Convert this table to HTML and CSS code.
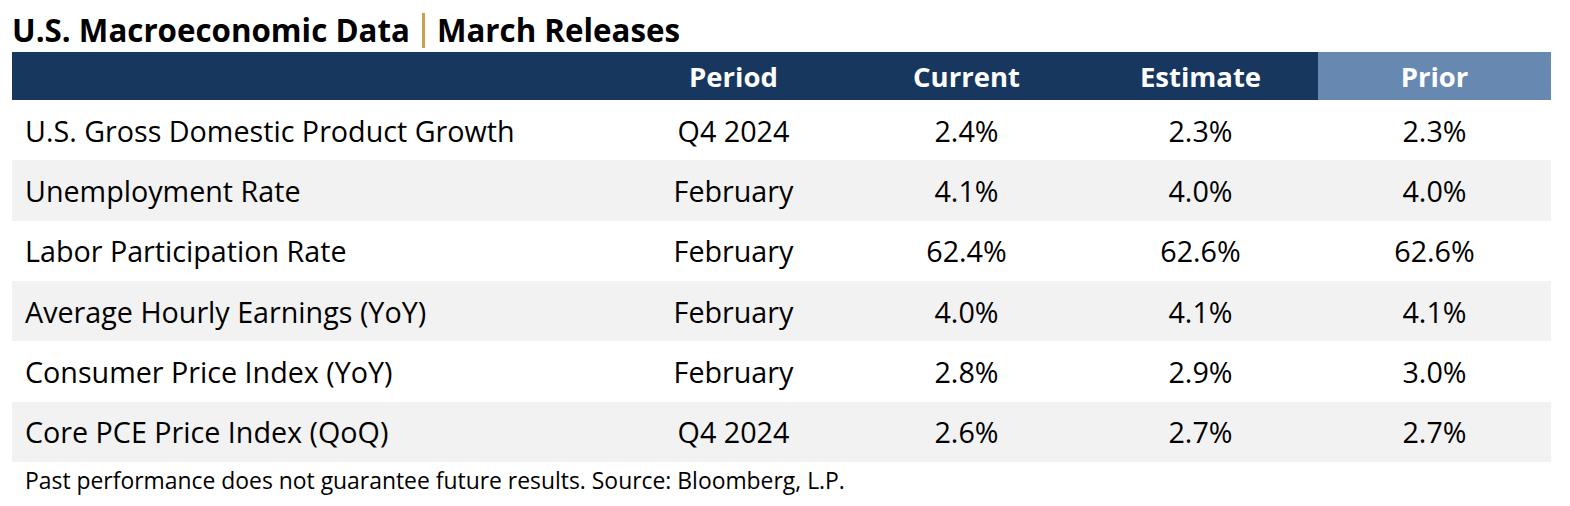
FILE: index.html
```html
<!DOCTYPE html>
<html>
<head>
<meta charset="utf-8">
<link rel="stylesheet" href="styles.css">
</head>
<body>
<div class="page">
  <h1 class="title">U.S. Macroeconomic Data<span class="bar"></span>March Releases</h1>
  <div class="table">
    <div class="row head">
      <div class="cell label"></div>
      <div class="cell">Period</div>
      <div class="cell">Current</div>
      <div class="cell">Estimate</div>
      <div class="cell prior">Prior</div>
    </div>
    <div class="row">
      <div class="cell label">U.S. Gross Domestic Product Growth</div>
      <div class="cell">Q4 2024</div>
      <div class="cell">2.4%</div>
      <div class="cell">2.3%</div>
      <div class="cell">2.3%</div>
    </div>
    <div class="row alt">
      <div class="cell label">Unemployment Rate</div>
      <div class="cell">February</div>
      <div class="cell">4.1%</div>
      <div class="cell">4.0%</div>
      <div class="cell">4.0%</div>
    </div>
    <div class="row">
      <div class="cell label">Labor Participation Rate</div>
      <div class="cell">February</div>
      <div class="cell">62.4%</div>
      <div class="cell">62.6%</div>
      <div class="cell">62.6%</div>
    </div>
    <div class="row alt">
      <div class="cell label">Average Hourly Earnings (YoY)</div>
      <div class="cell">February</div>
      <div class="cell">4.0%</div>
      <div class="cell">4.1%</div>
      <div class="cell">4.1%</div>
    </div>
    <div class="row">
      <div class="cell label">Consumer Price Index (YoY)</div>
      <div class="cell">February</div>
      <div class="cell">2.8%</div>
      <div class="cell">2.9%</div>
      <div class="cell">3.0%</div>
    </div>
    <div class="row alt">
      <div class="cell label">Core PCE Price Index (QoQ)</div>
      <div class="cell">Q4 2024</div>
      <div class="cell">2.6%</div>
      <div class="cell">2.7%</div>
      <div class="cell">2.7%</div>
    </div>
  </div>
  <p class="note">Past performance does not guarantee future results. Source: Bloomberg, L.P.</p>
</div>
</body>
</html>
```
FILE: styles.css
```css
html, body {
  margin: 0;
  padding: 0;
  background: #ffffff;
}
.page {
  font-family: "Open Sans", "Noto Sans", sans-serif;
  color: #000;
  padding: 0 0 0 12px;
  width: 1539px;
}
.title {
  margin: 0;
  height: 52px;
  box-sizing: border-box;
  padding-top: 8px;
  font-size: 31.3px;
  font-weight: 700;
  line-height: 38px;
  display: flex;
  align-items: center;
}
.bar {
  display: inline-block;
  width: 3px;
  height: 35px;
  background: #c9a24e;
  margin: 0 12px 0 12px;
}
.table {
  display: flex;
  flex-direction: column;
}
.row {
  display: grid;
  grid-template-columns: 605px 233px 233px 235px 233px;
  height: 60.33px;
  align-items: center;
  font-size: 28.7px;
}
.row.alt {
  background: #f2f2f2;
}
.row.head {
  height: 48px;
  background: #17375f;
  color: #fff;
  font-weight: 700;
  font-size: 27.5px;
  align-items: stretch;
}
.cell {
  text-align: center;
  display: flex;
  align-items: center;
  justify-content: center;
}
.cell.label {
  justify-content: flex-start;
  padding-left: 13px;
}
.cell.prior {
  background: #6789b1;
}
.note {
  margin: 0;
  padding: 4px 0 0 13px;
  font-size: 22.9px;
  line-height: 30px;
}
```
